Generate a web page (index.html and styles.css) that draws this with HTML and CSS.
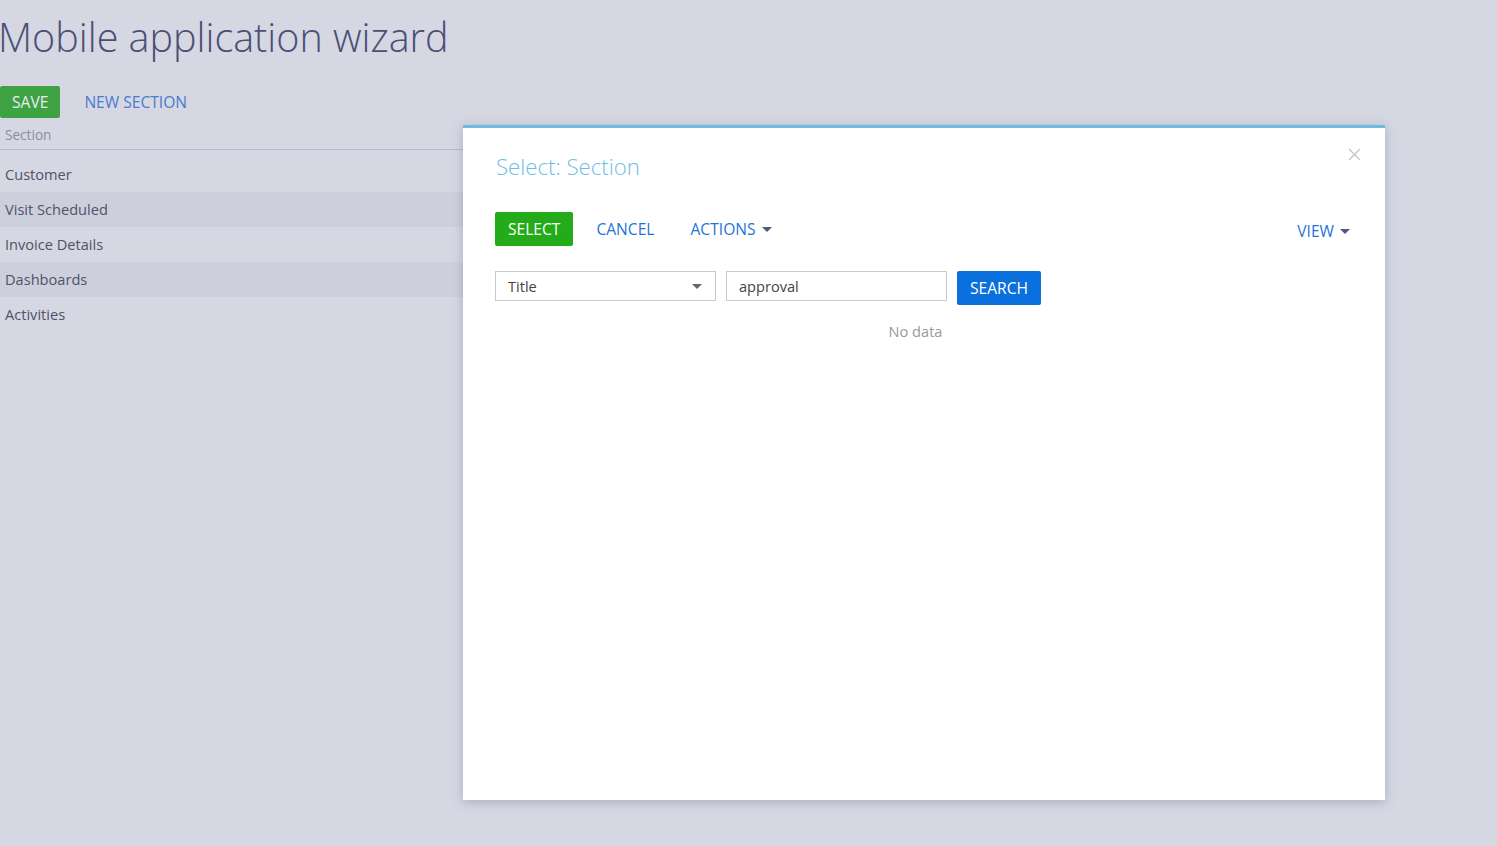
FILE: index.html
```html
<!DOCTYPE html>
<html lang="en">
<head>
  <meta charset="UTF-8">
  <title>Mobile application wizard</title>
  <link rel="stylesheet" href="styles.css">
</head>
<body>
  <div class="page">
    <h1 class="page-title">Mobile application wizard</h1>
    <div class="toolbar">
      <button class="btn btn-save">SAVE</button>
      <a class="link-btn">NEW SECTION</a>
    </div>
    <div class="section-list">
      <div class="list-head">Section</div>
      <div class="list-row first">Customer</div>
      <div class="list-row alt">Visit Scheduled</div>
      <div class="list-row">Invoice Details</div>
      <div class="list-row alt">Dashboards</div>
      <div class="list-row">Activities</div>
    </div>
  </div>

  <div class="modal">
    <span class="modal-close">
      <svg width="13" height="13" viewBox="0 0 13 13"><path d="M1 1 L12 12 M12 1 L1 12" stroke="#c4c4c4" stroke-width="1.4" fill="none"/></svg>
    </span>
    <h2 class="modal-title">Select: Section</h2>
    <div class="modal-actions">
      <button class="btn btn-select">SELECT</button>
      <a class="link-btn blue">CANCEL</a>
      <a class="link-btn blue">ACTIONS <span class="caret"></span></a>
      <a class="link-btn blue view">VIEW <span class="caret"></span></a>
    </div>
    <div class="search-row">
      <div class="field select-field">
        <span>Title</span>
        <span class="caret grey"></span>
      </div>
      <div class="field">approval</div>
      <button class="btn btn-search">SEARCH</button>
    </div>
    <div class="no-data">No data</div>
  </div>
</body>
</html>
```

FILE: styles.css
```css
* {
  box-sizing: border-box;
  margin: 0;
  padding: 0;
  font-family: 'Open Sans', sans-serif;
}

body {
  background: #d5d7e3;
  height: 100vh;
  overflow: hidden;
}

.page {
  padding-top: 9px;
}

.page-title {
  font-size: 39.5px;
  font-weight: 300;
  color: #4b4f75;
  line-height: 56px;
  margin-left: -2px;
}

.toolbar {
  display: flex;
  align-items: center;
  gap: 24px;
  margin-top: 21px;
}

.btn {
  border: none;
  border-radius: 2px;
  color: #fff;
  font-size: 15.6px;
  cursor: pointer;
}

.btn-save {
  background: #3fa242;
  color: #e6eef0;
  height: 32px;
  padding: 0 12px;
}

.link-btn {
  font-size: 15.6px;
  color: #4a7bce;
  cursor: pointer;
}

.section-list {
  width: 470px;
  margin-top: 4px;
}

.list-head {
  font-size: 13.6px;
  color: #8b8e9f;
  padding: 0 5px;
  height: 28px;
  line-height: 26px;
  border-bottom: 1px solid #b6b9c7;
}

.list-row {
  font-size: 14.6px;
  color: #50526a;
  padding: 0 5px;
  height: 35px;
  line-height: 35px;
}

.list-row.first {
  margin-top: 7px;
}

.list-row.alt {
  background: #cdd0dc;
}

.modal {
  position: absolute;
  left: 463px;
  top: 125px;
  width: 922px;
  height: 675px;
  background: #fff;
  border-top: 3px solid #6dbbe0;
  box-shadow: 0 2px 10px rgba(90, 95, 120, 0.35);
  padding: 23px 35px 22px 32px;
}

.modal-close {
  position: absolute;
  right: 24px;
  top: 20px;
  display: block;
  line-height: 0;
}

.modal-title {
  font-size: 22.2px;
  font-weight: 300;
  color: #6fbde4;
  line-height: 32px;
  margin-left: 1px;
}

.modal-actions {
  display: flex;
  align-items: center;
  margin-top: 29px;
}

.btn-select {
  background: #24ab1a;
  height: 34px;
  padding: 0 13px;
  margin-right: 23px;
}

.link-btn.blue {
  color: #1f74d6;
  margin-right: 36px;
  display: flex;
  align-items: center;
}

.link-btn.view {
  margin-left: auto;
  margin-right: 0;
  position: relative;
  top: 2px;
}

.caret {
  display: inline-block;
  width: 0;
  height: 0;
  border-left: 5px solid transparent;
  border-right: 5px solid transparent;
  border-top: 5px solid #4c5a82;
  margin-left: 6px;
}

.caret.grey {
  border-left-width: 5.5px;
  border-right-width: 5.5px;
  border-top-color: #666;
  margin-right: 1px;
}

.search-row {
  display: flex;
  align-items: flex-start;
  gap: 10px;
  margin-top: 25px;
}

.field {
  width: 221px;
  height: 30px;
  border: 1px solid #c9c9c9;
  font-size: 14.6px;
  color: #444;
  padding: 0 12px;
  line-height: 28px;
  display: flex;
  justify-content: space-between;
  align-items: center;
}

.btn-search {
  background: #0a70dd;
  height: 34px;
  padding: 0 13px;
}

.no-data {
  text-align: center;
  font-size: 14.6px;
  color: #999;
  line-height: 20px;
  margin-top: 16px;
  margin-right: 14px;
}
```
